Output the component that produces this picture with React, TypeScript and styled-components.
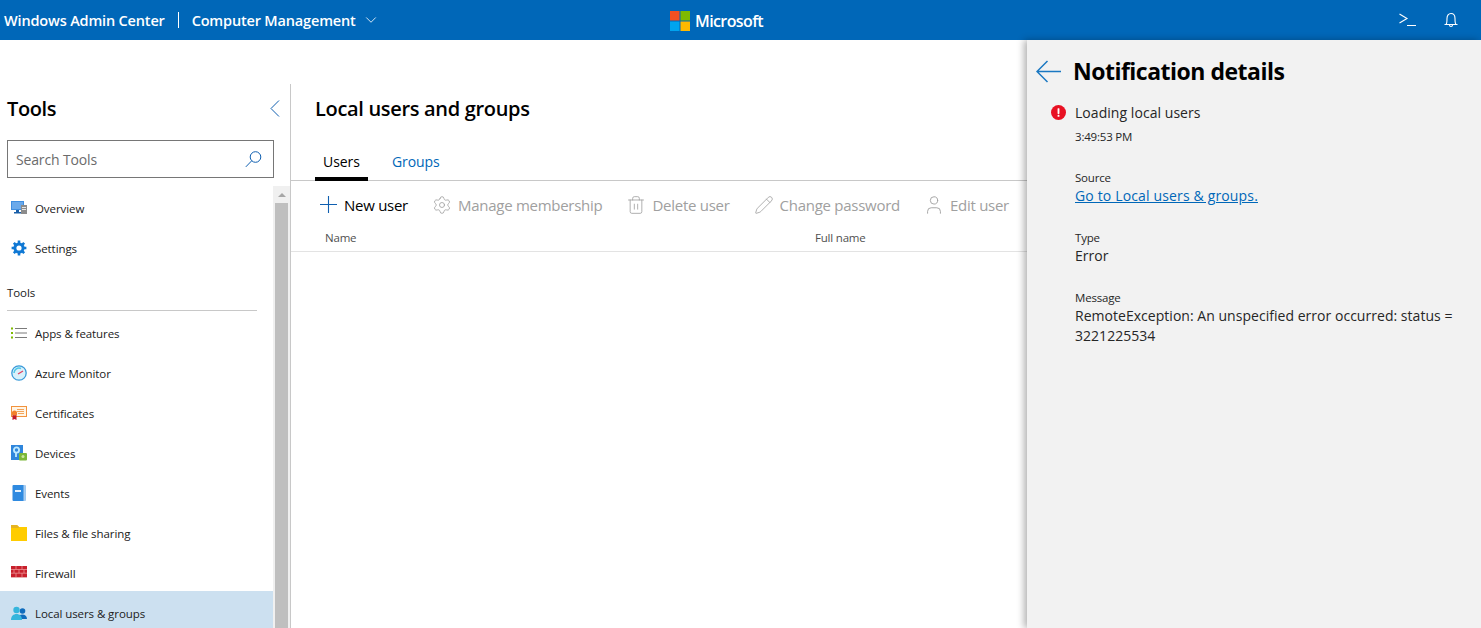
import { ReactNode } from 'react';
import styled, { createGlobalStyle } from 'styled-components';
import { ChevronDown, Pencil, Settings, Trash2, User } from 'lucide-react';

const GlobalStyle = createGlobalStyle`
  html, body {
    margin: 0;
    height: 100%;
    overflow: hidden;
    background: #fff;
    font-family: "Open Sans", "Noto Sans", sans-serif;
  }
  * { box-sizing: border-box; }
`;

const Page = styled.div`
  position: relative;
  width: 1481px;
  height: 628px;
  overflow: hidden;
  display: flex;
  flex-direction: column;
`;

const Header = styled.header`
  height: 40px;
  flex: none;
  background: #0067b8;
  color: #fff;
  display: grid;
  grid-template-columns: 666px auto 1fr;
  align-items: center;
  padding: 0 23px 0 4px;
`;

const HeaderLeft = styled.div`
  display: flex;
  align-items: center;
  font-size: 14.5px;
  font-weight: 600;
  letter-spacing: -0.17px;
`;

const Divider = styled.span`
  width: 1px;
  height: 16px;
  background: #fff;
  margin: 0 13px;
`;

const ChevronWrap = styled.span`
  display: flex;
  margin-left: 6px;
`;

const Brand = styled.div`
  display: flex;
  align-items: center;
  gap: 5px;
  padding-top: 2px;
  font-size: 16px;
  font-weight: 600;
  letter-spacing: -0.6px;
`;

const HeaderRight = styled.div`
  display: flex;
  justify-content: flex-end;
  align-items: center;
  gap: 27px;
`;

const Content = styled.div`
  flex: 1;
  display: flex;
  padding-top: 44px;
  min-height: 0;
`;

const Sidebar = styled.aside`
  width: 291px;
  flex: none;
  border-right: 1px solid #c8c8c8;
  display: flex;
  flex-direction: column;
`;

const SidebarHead = styled.div`
  height: 50px;
  padding: 0 10px 2px 7px;
  display: flex;
  align-items: center;
  justify-content: space-between;
`;

const SidebarTitle = styled.h2`
  margin: 0;
  font-size: 20px;
  font-weight: 600;
  letter-spacing: -0.4px;
  color: #000;
`;

const SearchBox = styled.div`
  width: 267px;
  height: 38px;
  margin: 6px 0 8px 7px;
  border: 1px solid #767676;
  display: flex;
  align-items: center;
  justify-content: space-between;
  padding: 0 11px 0 8px;
  font-size: 14px;
  color: #6b6b6b;
  letter-spacing: -0.15px;
`;

const ToolArea = styled.div`
  flex: 1;
  display: flex;
  min-height: 0;
`;

const ToolList = styled.nav`
  width: 273px;
  flex: none;
  padding-top: 2px;
`;

const ToolRow = styled.div<{ $active?: boolean }>`
  height: ${(p) => (p.$active ? '42px' : '40px')};
  margin-top: ${(p) => (p.$active ? '-2px' : '0')};
  padding: ${(p) => (p.$active ? '3px 0 0 11px' : '0 0 0 11px')};
  display: flex;
  align-items: center;
  gap: 8px;
  font-size: 11.5px;
  letter-spacing: -0.08px;
  color: #212121;
  background: ${(p) => (p.$active ? '#cce0f0' : 'transparent')};
`;

const ToolGroup = styled.div`
  margin: 11px 16px 2px 7px;
  height: 32px;
  padding-top: 6px;
  border-bottom: 1px solid #c8c8c8;
  font-size: 11.5px;
  letter-spacing: -0.08px;
  color: #212121;
`;

const IconSlot = styled.span`
  width: 16px;
  height: 16px;
  flex: none;
  display: flex;
`;

const Scrollbar = styled.div`
  width: 17px;
  background: #f0f0f0;
  display: flex;
  flex-direction: column;
  align-items: center;
`;

const ScrollArrow = styled.span`
  height: 17px;
  flex: none;
  display: flex;
  align-items: center;
  justify-content: center;
  &::before {
    content: '';
    border-left: 4px solid transparent;
    border-right: 4px solid transparent;
    border-bottom: 4px solid #a6a6a6;
  }
`;

const ScrollThumb = styled.span`
  flex: 1;
  width: 13px;
  background: #bfbfbf;
`;

const Main = styled.main`
  flex: 1;
  min-width: 0;
  display: flex;
  flex-direction: column;
`;

const PageTitle = styled.h1`
  margin: 0;
  height: 50px;
  padding: 0 0 2px 24px;
  display: flex;
  align-items: center;
  font-size: 20px;
  font-weight: 600;
  letter-spacing: -0.32px;
  color: #000;
`;

const Tabs = styled.div`
  margin-top: 12px;
  height: 35px;
  padding-left: 24px;
  display: flex;
  gap: 16px;
  border-bottom: 1px solid #c8c8c8;
`;

const Tab = styled.div<{ $active?: boolean }>`
  height: 35px;
  padding: 0 8px;
  font-size: 14px;
  line-height: 32px;
  letter-spacing: -0.05px;
  color: ${(p) => (p.$active ? '#000' : '#0067b8')};
  border-bottom: ${(p) => (p.$active ? '4px solid #000' : 'none')};
`;

const Toolbar = styled.div`
  height: 49px;
  padding: 0 0 2px 29px;
  display: flex;
  align-items: center;
  gap: 26px;
`;

const ToolButton = styled.div<{ $disabled?: boolean }>`
  display: flex;
  align-items: center;
  gap: 8px;
  font-size: 15px;
  font-weight: 500;
  letter-spacing: -0.27px;
  color: ${(p) => (p.$disabled ? '#a0a0a0' : '#000')};
`;

const ToolIcon = styled.span`
  width: 16px;
  height: 18px;
  flex: none;
  display: flex;
  align-items: center;
  justify-content: center;
  & > svg { flex: none; }
`;

const TableHead = styled.div`
  height: 22px;
  padding-left: 34px;
  border-bottom: 1px solid #e3e3e3;
  display: grid;
  grid-template-columns: 490px 1fr;
  font-size: 11.5px;
  letter-spacing: -0.2px;
  line-height: 16px;
  color: #505050;
`;

const Panel = styled.section`
  position: absolute;
  top: 40px;
  right: 0;
  bottom: 0;
  width: 454px;
  background: #f2f2f2;
  box-shadow: -3px 0 7px rgba(0, 0, 0, 0.3);
  padding: 15px 12px 0 9px;
`;

const PanelHead = styled.div`
  display: flex;
  align-items: center;
  gap: 12px;
  height: 32px;
`;

const PanelTitle = styled.h2`
  margin: 0;
  font-size: 23px;
  font-weight: 700;
  letter-spacing: -0.5px;
  color: #000;
`;

const PanelBody = styled.div`
  padding: 12px 0 0 39px;
`;

const StatusRow = styled.div`
  display: flex;
  align-items: center;
  height: 26px;
  font-size: 14px;
  letter-spacing: 0.05px;
  color: #262626;
`;

const StatusIcon = styled.span`
  position: absolute;
  left: 24px;
  display: flex;
`;

const Time = styled.div`
  margin: 4px 0 25px;
  font-size: 11.5px;
  letter-spacing: -0.2px;
  line-height: 16px;
  color: #262626;
`;

const Field = styled.div`
  & + & { margin-top: 24px; }
`;

const FieldLabel = styled.div`
  font-size: 11.5px;
  letter-spacing: -0.2px;
  line-height: 16px;
  color: #262626;
`;

const FieldValue = styled.div`
  font-size: 14px;
  letter-spacing: 0.03px;
  line-height: 20px;
  color: #262626;
`;

const FieldLink = styled.a`
  display: block;
  font-size: 14px;
  letter-spacing: 0.15px;
  line-height: 20px;
  color: #0067b8;
  text-decoration: underline;
`;

const OverviewIcon = () => (
  <svg width="16" height="16" viewBox="0 0 16 16">
    <rect x="0" y="1" width="13" height="9" fill="#3f8ee0" />
    <rect x="1" y="2" width="11" height="7" fill="#6aa9ea" />
    <rect x="5" y="10" width="3" height="2" fill="#1a5fa8" />
    <rect x="3" y="12" width="7" height="1.5" fill="#1a5fa8" />
    <rect x="10" y="5" width="6" height="9" fill="#8c8c8c" />
    <rect x="11" y="7" width="4" height="1" fill="#e6e6e6" />
    <rect x="11" y="9" width="4" height="1" fill="#e6e6e6" />
  </svg>
);

const SettingsIcon = () => (
  <svg width="16" height="16" viewBox="0 0 16 16">
    <circle cx="8" cy="8" r="5.6" fill="#0f78d4" />
    <g stroke="#0f78d4" strokeWidth="2.6">
      <path d="M8 .6v14.8M.6 8h14.8M2.8 2.8l10.4 10.4M13.2 2.8 2.8 13.2" />
    </g>
    <circle cx="8" cy="8" r="2.6" fill="#fff" />
  </svg>
);

const AppsIcon = () => (
  <svg width="16" height="16" viewBox="0 0 16 16">
    <path d="M4 3.5h12M4 8h12M4 12.5h12" stroke="#7a7a7a" strokeWidth="1" />
    <path d="M0 2.5h2v2H0zM0 7h2v2H0zM0 11.500h2v2H0z" fill="#7fba00" />
  </svg>
);

const MonitorIcon = () => (
  <svg width="16" height="16" viewBox="0 0 16 16">
    <circle cx="8" cy="8" r="7.2" fill="#d8f1fb" stroke="#3a9ad9" strokeWidth="1.3" />
    <path d="M3 8a5 5 0 0 1 7-4.500" fill="none" stroke="#50c8e8" strokeWidth="1.600" />
    <path d="M7 9l5-3" stroke="#e04060" strokeWidth="1.200" />
  </svg>
);

const CertificateIcon = () => (
  <svg width="16" height="16" viewBox="0 0 16 16">
    <rect x=".5" y="1.500" width="15" height="10" fill="#fff5e6" stroke="#f2923c" />
    <path d="M6 4.500h7M6 6.500h7M7 8.500h6" stroke="#f2a45c" />
    <path d="M1.500 9h4v6l-2-1-2 1z" fill="#c0182c" />
    <circle cx="3.500" cy="8" r="2.600" fill="#f2802c" />
  </svg>
);

const DevicesIcon = () => (
  <svg width="16" height="16" viewBox="0 0 16 16">
    <rect x="0" y="0" width="12" height="15" fill="#2f86dc" />
    <circle cx="5.500" cy="5" r="2.600" fill="none" stroke="#bfeaff" strokeWidth="1.800" />
    <path d="M5 8v4" stroke="#bfeaff" strokeWidth="1.800" />
    <rect x="8" y="8" width="8" height="7.500" rx="1" fill="#7cb83a" />
    <circle cx="12" cy="11.500" r="1.500" fill="#c9e6a0" />
  </svg>
);

const EventsIcon = () => (
  <svg width="16" height="16" viewBox="0 0 16 16">
    <rect x="1.500" y="0" width="13" height="16" rx="1" fill="#2f8ae0" />
    <rect x="12.500" y="0" width="2" height="16" fill="#a9cdf0" />
    <rect x="4" y="5" width="6" height="2" fill="#e6f2fc" />
  </svg>
);

const FolderIcon = () => (
  <svg width="16" height="16" viewBox="0 0 16 16">
    <path d="M0 0h6l2 2h8v14H0z" fill="#ffcc00" />
    <path d="M0 0h6l2 2v1H0z" fill="#e6b422" />
  </svg>
);

const FirewallIcon = () => (
  <svg width="16" height="16" viewBox="0 0 16 16">
    <rect x="0" y="1" width="16" height="11" fill="#c8202c" />
    <path d="M0 4.500h16M0 8.200h16M5 1v3.500M11 1v3.500M3 4.500v3.700M8 4.500v3.700M13 4.500v3.700M5 8.200V12M11 8.200V12" stroke="#f2a0a0" strokeWidth=".7" />
    <rect x="0" y="12" width="16" height="1" fill="#e8b0b0" />
  </svg>
);

const UsersIcon = () => (
  <svg width="16" height="16" viewBox="0 0 16 16">
    <circle cx="11.500" cy="5" r="2.800" fill="#0f6cbd" />
    <path d="M7 13c0-3 2-4.500 4.500-4.500S16 10 16 13z" fill="#0f6cbd" />
    <circle cx="5.500" cy="4" r="3.200" fill="#36b5dc" />
    <path d="M0 14c0-4 2.500-6 5.500-6s5.500 2 5.500 6z" fill="#36b5dc" />
  </svg>
);

const MicrosoftLogo = () => (
  <svg width="20" height="20" viewBox="0 0 20 20">
    <rect width="9.500" height="9.500" fill="#f25022" />
    <rect x="10.500" width="9.500" height="9.500" fill="#7fba00" />
    <rect y="10.500" width="9.500" height="9.500" fill="#00a4ef" />
    <rect x="10.500" y="10.500" width="9.500" height="9.500" fill="#ffb900" />
  </svg>
);

const TerminalIcon = () => (
  <svg width="18" height="14" viewBox="0 0 18 14" fill="none" stroke="#fff" strokeWidth="1.100">
    <path d="M.5 1 8 5.500.5 10M8 12.500h9" />
  </svg>
);

const BellIcon = () => (
  <svg width="14" height="16" viewBox="0 0 14 16" fill="none" stroke="#fff" strokeWidth="1.100">
    <path d="M.5 12.500h13M2 12.500c1-1 1-2.500 1-6 0-3 1.500-5 4-5s4 2 4 5c0 3.500 0 5 1 6M5.500 13c0 2 3 2 3 0" />
  </svg>
);

const SearchIcon = () => (
  <svg width="17" height="17" viewBox="0 0 17 17" fill="none" stroke="#0f5fb0" strokeWidth="1">
    <circle cx="10.500" cy="6" r="5.300" />
    <path d="M6.700 9.800.8 15.900" />
  </svg>
);

const CollapseIcon = () => (
  <svg width="10" height="17" viewBox="0 0 10 17" fill="none" stroke="#0f5fb0" strokeWidth="1">
    <path d="M9 .5 1 8.500l8 8" />
  </svg>
);

const PlusIcon = () => (
  <svg width="17" height="17" viewBox="0 0 17 17" fill="none" stroke="#0f5fb0" strokeWidth="1.100">
    <path d="M8.500 0v17M0 8.500h17" />
  </svg>
);

const BackIcon = () => (
  <svg width="25" height="23" viewBox="0 0 25 23" fill="none" stroke="#1a78c2" strokeWidth="1.500">
    <path d="M11.500 1 1 11.500 11.500 22M1 11.500h24" />
  </svg>
);

const ErrorIcon = () => (
  <svg width="15" height="15" viewBox="0 0 16 16">
    <circle cx="8" cy="8" r="8" fill="#e81123" />
    <rect x="7" y="3.500" width="2" height="6" rx=".6" fill="#fff" />
    <rect x="7" y="10.500" width="2" height="2" rx=".6" fill="#fff" />
  </svg>
);

const tools: { label: string; icon: ReactNode; active?: boolean }[] = [
  { label: 'Apps & features', icon: <AppsIcon /> },
  { label: 'Azure Monitor', icon: <MonitorIcon /> },
  { label: 'Certificates', icon: <CertificateIcon /> },
  { label: 'Devices', icon: <DevicesIcon /> },
  { label: 'Events', icon: <EventsIcon /> },
  { label: 'Files & file sharing', icon: <FolderIcon /> },
  { label: 'Firewall', icon: <FirewallIcon /> },
  { label: 'Local users & groups', icon: <UsersIcon />, active: true },
];

const App = () => {
  return (
    <Page>
      <GlobalStyle />
      <Header>
        <HeaderLeft>
          Windows Admin Center
          <Divider />
          Computer Management
          <ChevronWrap>
            <ChevronDown size={18} strokeWidth={1.1} />
          </ChevronWrap>
        </HeaderLeft>
        <Brand>
          <MicrosoftLogo />
          Microsoft
        </Brand>
        <HeaderRight>
          <TerminalIcon />
          <BellIcon />
        </HeaderRight>
      </Header>
      <Content>
        <Sidebar>
          <SidebarHead>
            <SidebarTitle>Tools</SidebarTitle>
            <CollapseIcon />
          </SidebarHead>
          <SearchBox>
            Search Tools
            <SearchIcon />
          </SearchBox>
          <ToolArea>
            <ToolList>
              <ToolRow>
                <IconSlot>
                  <OverviewIcon />
                </IconSlot>
                Overview
              </ToolRow>
              <ToolRow>
                <IconSlot>
                  <SettingsIcon />
                </IconSlot>
                Settings
              </ToolRow>
              <ToolGroup>Tools</ToolGroup>
              {tools.map((tool) => (
                <ToolRow key={tool.label} $active={tool.active}>
                  <IconSlot>{tool.icon}</IconSlot>
                  {tool.label}
                </ToolRow>
              ))}
            </ToolList>
            <Scrollbar>
              <ScrollArrow />
              <ScrollThumb />
            </Scrollbar>
          </ToolArea>
        </Sidebar>
        <Main>
          <PageTitle>Local users and groups</PageTitle>
          <Tabs>
            <Tab $active>Users</Tab>
            <Tab>Groups</Tab>
          </Tabs>
          <Toolbar>
            <ToolButton>
              <ToolIcon>
                <PlusIcon />
              </ToolIcon>
              New user
            </ToolButton>
            <ToolButton $disabled>
              <ToolIcon>
                <Settings size={20} strokeWidth={1} />
              </ToolIcon>
              Manage membership
            </ToolButton>
            <ToolButton $disabled>
              <ToolIcon>
                <Trash2 size={20} strokeWidth={1} />
              </ToolIcon>
              Delete user
            </ToolButton>
            <ToolButton $disabled>
              <ToolIcon>
                <Pencil size={20} strokeWidth={1} />
              </ToolIcon>
              Change password
            </ToolButton>
            <ToolButton $disabled>
              <ToolIcon>
                <User size={22} strokeWidth={1} />
              </ToolIcon>
              Edit user
            </ToolButton>
          </Toolbar>
          <TableHead>
            <span>Name</span>
            <span>Full name</span>
          </TableHead>
        </Main>
      </Content>
      <Panel>
        <PanelHead>
          <BackIcon />
          <PanelTitle>Notification details</PanelTitle>
        </PanelHead>
        <PanelBody>
          <StatusRow>
            <StatusIcon>
              <ErrorIcon />
            </StatusIcon>
            Loading local users
          </StatusRow>
          <Time>3:49:53 PM</Time>
          <Field>
            <FieldLabel>Source</FieldLabel>
            <FieldLink>Go to Local users &amp; groups.</FieldLink>
          </Field>
          <Field>
            <FieldLabel>Type</FieldLabel>
            <FieldValue>Error</FieldValue>
          </Field>
          <Field>
            <FieldLabel>Message</FieldLabel>
            <FieldValue>
              RemoteException: An unspecified error occurred: status =
              <br />
              3221225534
            </FieldValue>
          </Field>
        </PanelBody>
      </Panel>
    </Page>
  );
};

export default App;
